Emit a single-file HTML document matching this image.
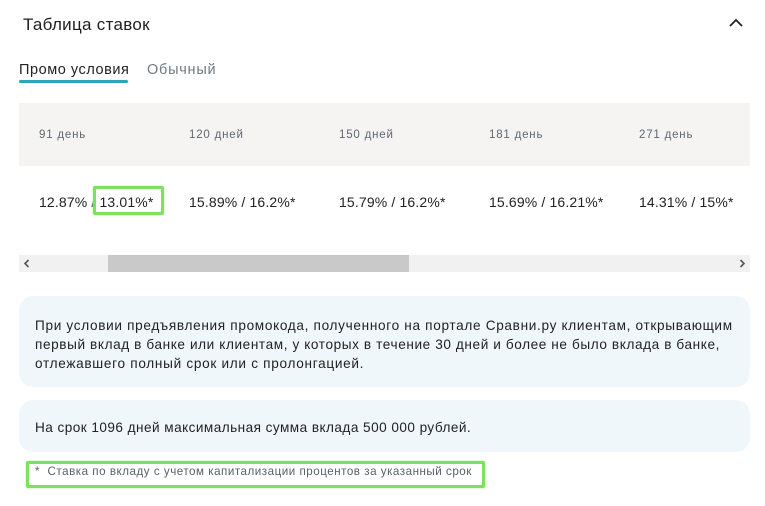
<!DOCTYPE html>
<html><head><meta charset="utf-8"><style>
*{margin:0;padding:0;box-sizing:border-box}
body{width:765px;height:506px;background:#fff;font-family:"Liberation Sans","DejaVu Sans",sans-serif;color:#1e1e1e;position:relative;overflow:hidden}
.a{position:absolute;white-space:nowrap}
.h{left:23px;top:15px;font-size:17px;letter-spacing:0.3px}
.tab1{left:19px;top:62px;font-size:14.5px;color:#222;letter-spacing:0.55px}
.ul{left:19px;top:80px;width:109px;height:3px;background:#2aa6b8;border-radius:2px}
.tab2{left:147px;top:62px;font-size:14.5px;color:#707a82;letter-spacing:0.75px}
.hdr{left:19px;top:103px;width:731px;height:63px;background:#f5f4f3}
.hc{top:129px;font-size:11.5px;color:#5f6770;letter-spacing:0.8px}
.vc{top:194px;font-size:14px;color:#222;letter-spacing:0.15px}
.sb{left:19px;top:255px;width:731px;height:17px;background:#f1f1f1}
.th{left:108px;top:255px;width:301px;height:17px;background:#c9c9c9}
.box{left:19px;width:731px;background:#f0f7fb;border-radius:14px}
.t{font-size:13.6px;color:#222;line-height:19px}
.g{border:3px solid #7fe15b;border-radius:2px;box-shadow:0 0 2px #b5f09c}
</style></head><body>
<div class="a h">Таблица ставок</div>
<svg class="a" style="left:727px;top:17px" width="18" height="12" viewBox="0 0 18 12"><path d="M3 9 L9 3 L15 9" stroke="#222" stroke-width="1.8" fill="none"/></svg>
<div class="a tab1">Промо условия</div>
<div class="a ul"></div>
<div class="a tab2">Обычный</div>
<div class="a hdr"></div>
<div class="a hc" style="left:39px">91 день</div>
<div class="a hc" style="left:189px">120 дней</div>
<div class="a hc" style="left:339px">150 дней</div>
<div class="a hc" style="left:489px">181 день</div>
<div class="a hc" style="left:639px">271 день</div>
<div class="a vc" style="left:39px">12.87% / 13.01%*</div>
<div class="a g" style="left:93px;top:186px;width:71px;height:29px"></div>
<div class="a vc" style="left:189px">15.89% / 16.2%*</div>
<div class="a vc" style="left:339px">15.79% / 16.2%*</div>
<div class="a vc" style="left:489px">15.69% / 16.21%*</div>
<div class="a vc" style="left:639px">14.31% / 15%*</div>
<div class="a sb"></div>
<div class="a th"></div>
<svg class="a" style="left:22px;top:258px" width="10" height="11"><path d="M6.5 2 L3 5.5 L6.5 9" stroke="#555" stroke-width="1.6" fill="none"/></svg>
<svg class="a" style="left:737px;top:258px" width="10" height="11"><path d="M3.5 2 L7 5.5 L3.5 9" stroke="#555" stroke-width="1.6" fill="none"/></svg>
<div class="a box" style="top:296px;height:91px"></div>
<div class="a t" style="left:35px;top:316px"><span style="letter-spacing:0.68px">При условии предъявления промокода, полученного на портале Сравни.ру клиентам, открывающим</span><br><span style="letter-spacing:0.6px">первый вклад в банке или клиентам, у которых в течение 30 дней и более не было вклада в банке,</span><br><span style="letter-spacing:0.7px">отлежавшего полный срок или с пролонгацией.</span></div>
<div class="a box" style="top:400px;height:52px"></div>
<div class="a t" style="left:35px;top:418px;letter-spacing:0.45px">На срок 1096 дней максимальная сумма вклада 500 000 рублей.</div>
<div class="a g" style="left:26px;top:461px;width:459px;height:27px"></div>
<div class="a" style="left:35px;top:465px;font-size:11.6px;color:#5a6068;letter-spacing:0.52px">*&nbsp; Ставка по вкладу с учетом капитализации процентов за указанный срок</div>
</body></html>
